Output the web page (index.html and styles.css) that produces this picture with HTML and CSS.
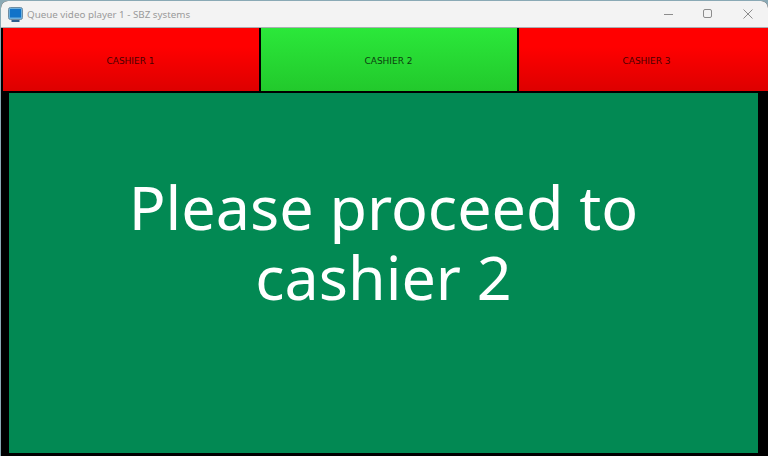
FILE: index.html
```html
<!DOCTYPE html>
<html lang="en">
<head>
  <meta charset="UTF-8" />
  <title>Queue video player 1 - SBZ systems</title>
  <link rel="stylesheet" href="styles.css">
</head>
<body>
  <div class="window">
    <div class="titlebar">
      <svg class="app-icon" width="15" height="15" viewBox="0 0 15 15">
        <rect x="0.5" y="0.5" width="14" height="12" rx="2" fill="#6fb0de" stroke="#6f8ca2"/>
        <rect x="2" y="2" width="11" height="8.5" fill="#1173c9"/>
        <rect x="3.5" y="13" width="8" height="2" fill="#2f5f8f"/>
      </svg>
      <span class="title">Queue video player 1 - SBZ systems</span>
      <div class="controls">
        <svg width="10" height="10" viewBox="0 0 10 10"><path d="M0 5.5h9" stroke="#8c8c8c" fill="none"/></svg>
        <svg width="10" height="10" viewBox="0 0 10 10"><rect x="0.5" y="0.5" width="8" height="8" rx="1.5" stroke="#8c8c8c" fill="none"/></svg>
        <svg class="close" width="10" height="10" viewBox="0 0 10 10"><path d="M0.5 0.5l9 9M9.5 0.5l-9 9" stroke="#8c8c8c" fill="none"/></svg>
      </div>
    </div>
    <div class="cashiers">
      <div class="cashier busy">CASHIER 1</div>
      <div class="cashier free">CASHIER 2</div>
      <div class="cashier busy">CASHIER 3</div>
    </div>
    <div class="stage">
      <div class="message">Please proceed to<br>cashier 2</div>
    </div>
  </div>
</body>
</html>
```

FILE: styles.css
```css
html, body { margin: 0; height: 100%; background: #8aa9b5; overflow: hidden; }
body { font-family: "DejaVu Sans", sans-serif; padding: 1px 0 0 1px; box-sizing: border-box; }

.window { height: 455px; display: flex; flex-direction: column; background: #000; overflow: hidden; border-radius: 7px 7px 0 0; }

.titlebar { height: 26px; flex: none; background: #f3f3f3; border-bottom: 1px solid #a9aeb2; display: flex; align-items: center; padding-left: 7px; }
.app-icon { margin-right: 4px; }
.title { font-family: "Noto Sans", sans-serif; font-size: 9.8px; color: #9a9a9a; flex: 1; }
.controls { display: flex; gap: 29px; padding-right: 15px; }
.close { margin-left: 1px; }

.cashiers { height: 63px; flex: none; display: flex; gap: 2px; padding-left: 1.5px; margin-bottom: 2px; }
.cashier { width: 256px; flex: none; display: flex; align-items: center; justify-content: center; box-sizing: border-box; padding-top: 3px; font-size: 9px; }
.busy { background: linear-gradient(#ff0000 30%, #dd0000); color: #4a0000; }
.free { background: linear-gradient(#2be83a, #22c92c); color: #0c400f; }

.stage { flex: 1; margin: 0 10px 3px 8px; background: #028953; display: flex; justify-content: center; padding-top: 79px; }
.message { color: #fff; font-family: "Noto Sans", sans-serif; font-size: 61px; line-height: 70px; text-align: center; }
```
